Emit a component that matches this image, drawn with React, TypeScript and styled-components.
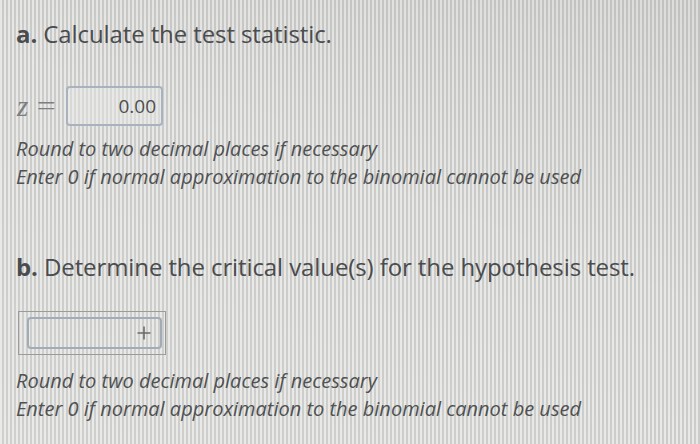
import React from "react";
import styled, { createGlobalStyle } from "styled-components";

const Global = createGlobalStyle`
  html, body { margin: 0; padding: 0; }
  body {
    width: 700px;
    height: 444px;
    overflow: hidden;
    font-family: "Open Sans", "Noto Sans", sans-serif;
    background-color: #d8d8d6;
    background-image:
      linear-gradient(200deg, rgba(0,0,0,0.05) 0%, rgba(255,255,255,0) 45%, rgba(255,255,255,0.08) 100%),
      repeating-linear-gradient(90deg, #e8e8e6 0px, #e8e8e6 2px, #cbcbc9 2px, #cbcbc9 4px);
  }
`;

const Page = styled.div`
  padding: 17px 0 0 16px;
  color: #4d4f50;
`;

const Section = styled.section<{ $gap: number }>`
  display: flex;
  flex-direction: column;
  margin-bottom: ${(p) => p.$gap}px;
`;

const Heading = styled.h2`
  margin: 0;
  font-size: 24px;
  font-weight: 400;
  line-height: 34px;
  color: #4a4c4e;
  letter-spacing: -0.1px;
  b { font-weight: 700; }
`;

const AnswerRow = styled.div<{ $top: number; $bottom: number }>`
  display: flex;
  align-items: center;
  gap: 10px;
  margin-top: ${(p) => p.$top}px;
  margin-bottom: ${(p) => p.$bottom}px;
`;

const MathVar = styled.span`
  width: 40px;
  font-family: "Liberation Serif", "DejaVu Serif", serif;
  color: #7c7e80;
  display: flex;
  align-items: center;
  justify-content: space-between;
  padding-left: 1px;
  box-sizing: border-box;
`;

const MathIdent = styled.i`
  font-style: italic;
  font-size: 29px;
  line-height: 1;
`;

const MathOp = styled.span`
  font-size: 28px;
  line-height: 1;
  transform: scaleX(1.2);
  transform-origin: right center;
`;

const ValueBox = styled.div`
  width: 97px;
  height: 40px;
  box-sizing: border-box;
  border: 2px solid #a9b3bf;
  border-radius: 4px;
  background: rgba(232, 233, 232, 0.45);
  display: flex;
  align-items: center;
  justify-content: flex-end;
  padding-right: 5px;
  font-size: 19px;
  color: #4d4f50;
`;

const Note = styled.p`
  margin: 0;
  font-style: italic;
  font-size: 20px;
  line-height: 28px;
  color: #4f5152;
`;

const OuterFrame = styled.div`
  width: 148px;
  height: 44px;
  box-sizing: border-box;
  border: 1px solid #9a9c9c;
  margin-left: 2px;
  padding: 5px 3px 5px 8px;
  display: flex;
`;

const InnerField = styled.div`
  flex: 1;
  box-sizing: border-box;
  border: 2px solid #a2acb8;
  border-radius: 4px;
  display: flex;
  align-items: center;
  justify-content: flex-end;
  padding-right: 9px;
  color: #6a6c6e;
`;

const PlusIcon = () => (
  <svg width="14" height="14" viewBox="0 0 14 14" aria-hidden="true">
    <path d="M7 0.5V13.5M0.5 7H13.5" stroke="currentColor" strokeWidth="1.6" fill="none" />
  </svg>
);

export default function App() {
  return (
    <>
      <Global />
      <Page>
        <Section $gap={59}>
          <Heading>
            <b>a.</b> Calculate the test statistic.
          </Heading>
          <AnswerRow $top={35} $bottom={9}>
            <MathVar>
              <MathIdent>z</MathIdent>
              <MathOp>=</MathOp>
            </MathVar>
            <ValueBox>0.00</ValueBox>
          </AnswerRow>
          <Note>Round to two decimal places if necessary</Note>
          <Note>Enter 0 if normal approximation to the binomial cannot be used</Note>
        </Section>
        <Section $gap={0}>
          <Heading>
            <b>b.</b> Determine the critical value(s) for the hypothesis test.
          </Heading>
          <AnswerRow $top={27} $bottom={12}>
            <OuterFrame>
              <InnerField>
                <PlusIcon />
              </InnerField>
            </OuterFrame>
          </AnswerRow>
          <Note>Round to two decimal places if necessary</Note>
          <Note>Enter 0 if normal approximation to the binomial cannot be used</Note>
        </Section>
      </Page>
    </>
  );
}
